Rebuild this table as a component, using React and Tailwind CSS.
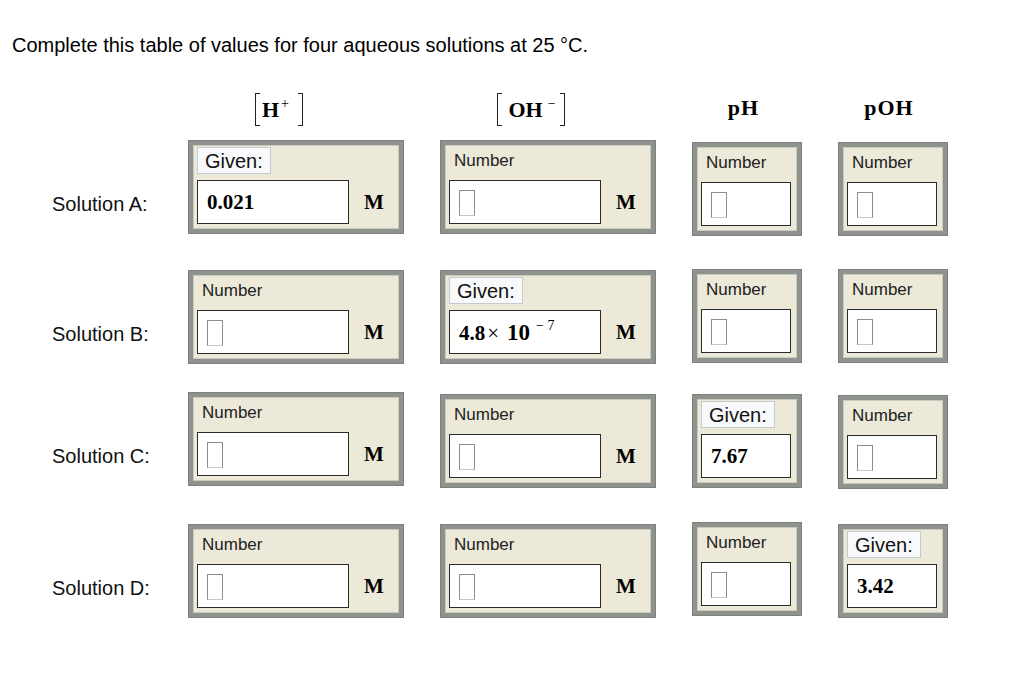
import React from 'react';

const serif = "font-['Liberation_Serif','Times_New_Roman',serif]";

const filas = [
	{
		nome: 'Solution A:',
		topo: 'mt-[15px]',
		celulas: [
			{ tipo: 'largo', dado: <span>0.021</span> },
			{ tipo: 'largo' },
			{ tipo: 'estreito', ajuste: 'mt-[2px]' },
			{ tipo: 'estreito', ajuste: 'mt-[2px]' },
		],
	},
	{
		nome: 'Solution B:',
		topo: 'mt-[36px]',
		celulas: [
			{ tipo: 'largo' },
			{
				tipo: 'largo',
				dado: (
					<span className="flex items-baseline">
						<span>4.8</span>
						<span className="font-normal ml-[2px] mr-[8px]">×</span>
						<span className="text-[23px]">10</span>
						<span className="font-normal text-[14px] relative -top-[10px] ml-[6px]">− 7</span>
					</span>
				),
			},
			{ tipo: 'estreito', ajuste: '-mt-[1px]' },
			{ tipo: 'estreito', ajuste: '-mt-[1px]' },
		],
	},
	{
		nome: 'Solution C:',
		topo: 'mt-[30px]',
		celulas: [
			{ tipo: 'largo' },
			{ tipo: 'largo', ajuste: 'mt-[2px]' },
			{ tipo: 'estreito', ajuste: 'mt-[2px]', dado: <span>7.67</span> },
			{ tipo: 'estreito', ajuste: 'mt-[3px]' },
		],
	},
	{
		nome: 'Solution D:',
		topo: 'mt-[37px]',
		celulas: [
			{ tipo: 'largo' },
			{ tipo: 'largo' },
			{ tipo: 'estreito', ajuste: '-mt-[2px]' },
			{ tipo: 'estreito', dado: <span>3.42</span> },
		],
	},
];

function Rotulo({ dado }) {
	if (dado) {
		return (
			<div className="h-[27px] flex">
				<div className="h-[27px] px-[7px] flex items-center bg-[#f8f9fa] border border-[#c4cad0] text-[20px] text-[#111]">
					Given:
				</div>
			</div>
		);
	}
	return <div className="h-[27px] pl-[5px] pt-[1px] flex items-center text-[17px] text-[#222]">Number</div>;
}

function Campo({ dado, largura }) {
	return (
		<div className={`${largura} h-[44px] bg-white border border-[#2a2a2a] flex items-center pl-[9px] pt-[2px]`}>
			{dado ? (
				<div className={`${serif} font-bold text-[21px] text-black`}>{dado}</div>
			) : (
				<div className="w-[16px] h-[26px] border border-[#8c8c8c] border-b-[#c8c8c8] bg-white" />
			)}
		</div>
	);
}

function Caixa({ tipo, dado, ajuste = '' }) {
	const largo = tipo === 'largo';
	return (
		<div
			className={`${ajuste} ${largo ? 'w-[214px]' : 'w-[108px]'} h-[92px] shrink-0 bg-[#ece9d8] border-[4px] border-[#8e938e] shadow-[inset_0_0_0_1px_#c9cabd,0_0_0_1px_#7c817c] pl-[4px] pt-[2px]`}
		>
			<Rotulo dado={dado} />
			<div className="mt-[6px] flex items-center">
				<Campo dado={dado} largura={largo ? 'w-[152px]' : 'w-[90px]'} />
				{largo && <div className={`${serif} flex-1 text-center font-bold text-[21px] text-black pt-[2px]`}>M</div>}
			</div>
		</div>
	);
}

function Colchete({ lado }) {
	return (
		<span
			className={`inline-block w-[5px] h-[33px] border-[#222] border-y ${lado === 'e' ? 'border-l' : 'border-r'}`}
		/>
	);
}

export default function App() {
	return (
		<div className="w-[1024px] h-[682px] bg-white font-['Liberation_Sans',Arial,sans-serif] text-black overflow-hidden">
			<div className="pt-[33px] pl-[12px] text-[20px] leading-[24px]">
				Complete this table of values for four aqueous solutions at 25 °C.
			</div>

			<div className="mt-[35px] pl-[189px] flex gap-[38px] h-[34px]">
				<div className="w-[214px] pr-[34px] flex justify-center items-center">
					<Colchete lado="e" />
					<span className={`${serif} font-bold text-[22px] ml-[2px]`}>H</span>
					<span className={`${serif} text-[14px] self-start mt-[1px] ml-[2px] mr-[9px]`}>+</span>
					<Colchete lado="d" />
				</div>
				<div className="w-[214px] pr-[34px] flex justify-center items-center">
					<Colchete lado="e" />
					<span className={`${serif} font-bold text-[22px] ml-[6px]`}>OH</span>
					<span className={`${serif} text-[14px] self-start mt-[1px] ml-[5px] mr-[4px]`}>−</span>
					<Colchete lado="d" />
				</div>
				<div className={`${serif} w-[108px] pr-[7px] flex justify-center items-end pb-[2px] font-bold text-[22px] tracking-[1px]`}>
					pH
				</div>
				<div className={`${serif} w-[108px] pr-[8px] flex justify-center items-end pb-[2px] font-bold text-[22px] tracking-[1px]`}>
					pOH
				</div>
			</div>

			{filas.map((f) => (
				<div key={f.nome} className={`${f.topo} flex items-start`}>
					<div className="w-[189px] pl-[52px] h-[92px] flex items-end pb-[18px] text-[20px] leading-[22px] text-[#111]">
						{f.nome}
					</div>
					<div className="flex items-start gap-[38px]">
						{f.celulas.map((c, i) => (
							<Caixa key={i} tipo={c.tipo} dado={c.dado} ajuste={c.ajuste} />
						))}
					</div>
				</div>
			))}
		</div>
	);
}
